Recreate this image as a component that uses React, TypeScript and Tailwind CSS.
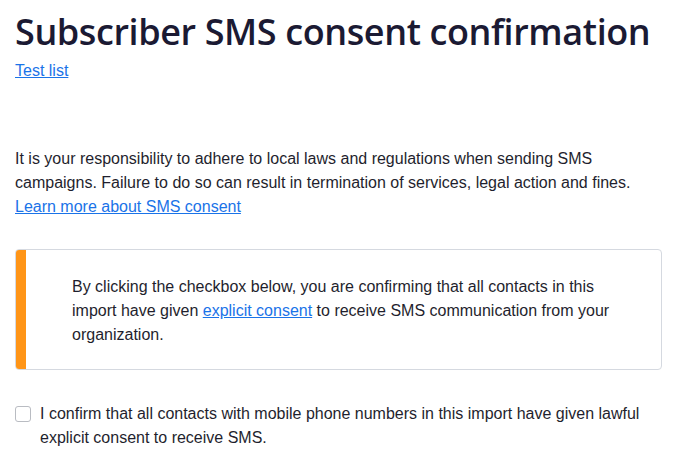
export default function App() {
  const body = { fontFamily: '"Liberation Sans", Arial, sans-serif' };
  return (
    <div className="bg-white min-h-screen px-[15px] pt-[5px] text-[#1f1f2e]" style={body}>
      <h1 className="text-[36px] leading-[54px] font-[540] tracking-[-0.4px] text-[#1b1a33] whitespace-nowrap" style={{ fontFamily: '"Open Sans", sans-serif' }}>
        Subscriber SMS consent confirmation
      </h1>
      <a href="#" className="text-[16px] leading-[20px] text-[#1a73e8] underline">Test list</a>
      <p className="mt-[64px] text-[16px] leading-[24px] text-[#1f1f2e]">
        It is your responsibility to adhere to local laws and regulations when sending SMS campaigns. Failure to do so can result in termination of services, legal action and fines.{" "}
        <a href="#" className="text-[#1a73e8] underline">Learn more about SMS consent</a>
      </p>
      <div className="mt-[30px] flex border border-[#d5d9e0] rounded-[4px] overflow-hidden">
        <div className="w-[10px] bg-[#ff9517] shrink-0" />
        <div className="pl-[46px] pr-[30px] pt-[25px] pb-[22px] text-[16px] leading-[24px]">
          By clicking the checkbox below, you are confirming that all contacts in this import have given{" "}
          <a href="#" className="text-[#1a73e8] underline">explicit consent</a> to receive SMS communication from your organization.
        </div>
      </div>
      <label className="mt-[32px] flex items-start gap-[9px] text-[16px] leading-[24px]">
        <span className="mt-[4px] w-[16px] h-[16px] shrink-0 border border-[#b9bcc2] rounded-[3px] bg-white" />
        <span>I confirm that all contacts with mobile phone numbers in this import have given lawful explicit consent to receive SMS.</span>
      </label>
    </div>
  );
}
